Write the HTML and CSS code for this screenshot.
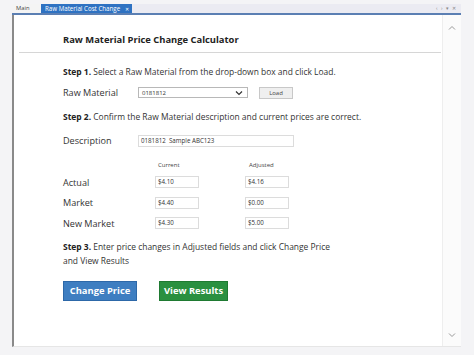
FILE: index.html
```html
<!DOCTYPE html>
<html>
<head>
<meta charset="utf-8">
<link rel="stylesheet" href="styles.css">
</head>
<body>
<div class="app">
  <div class="tabbar">
    <div class="tab tab-main">Main</div>
    <div class="tab tab-active">Raw Material Cost Change <span class="tab-x">✕</span></div>
    <div class="tab-tools">‹ › ▾ ✕</div>
  </div>
  <div class="panel">
    <div class="content">
      <h1 class="title">Raw Material Price Change Calculator</h1>
      <div class="rule"></div>
      <p class="step step1"><b>Step 1.</b> Select a Raw Material from the drop-down box and click Load.</p>
      <div class="row">
        <span class="label">Raw Material</span>
        <div class="select"><span>0181812</span><svg width="8" height="6" viewBox="0 0 8 6"><path d="M1 1.5 L4 4.5 L7 1.5" fill="none" stroke="#333" stroke-width="1.2"/></svg></div>
        <div class="btn-load">Load</div>
      </div>
      <p class="step step2"><b>Step 2.</b> Confirm the Raw Material description and current prices are correct.</p>
      <div class="row row-desc">
        <span class="label">Description</span>
        <div class="input input-desc">0181812&nbsp; Sample ABC123</div>
      </div>
      <div class="grid">
        <span></span><span class="colhead">Current</span><span class="colhead">Adjusted</span>
        <span class="label">Actual</span><div class="input input-price">$4.10</div><div class="input input-price">$4.16</div>
        <span class="label">Market</span><div class="input input-price">$4.40</div><div class="input input-price">$0.00</div>
        <span class="label">New Market</span><div class="input input-price">$4.30</div><div class="input input-price">$5.00</div>
      </div>
      <p class="step step3"><b>Step 3.</b> Enter price changes in Adjusted fields and click Change Price<br>and View Results</p>
      <div class="buttons">
        <div class="btn btn-blue">Change Price</div>
        <div class="btn btn-green">View Results</div>
      </div>
    </div>
    <div class="scrollbar">
      <svg width="8" height="6" viewBox="0 0 8 6"><path d="M1 4.5 L4 1.5 L7 4.5" fill="none" stroke="#999" stroke-width="1"/></svg>
      <svg width="8" height="6" viewBox="0 0 8 6"><path d="M1 1.5 L4 4.5 L7 1.5" fill="none" stroke="#999" stroke-width="1"/></svg>
    </div>
  </div>
</div>
</body>
</html>
```

FILE: styles.css
```css
html, body {
  margin: 0;
  padding: 0;
}
body {
  background: #f4f4f6;
  font-family: "Open Sans", "Noto Sans", sans-serif;
  color: #222;
  width: 474px;
  height: 355px;
  overflow: hidden;
}
.app {
  padding: 4px 0 0 12px;
  width: 449px;
}
.tabbar {
  display: flex;
  align-items: stretch;
  height: 9px;
  background: #ebebf2;
  border-bottom: 2px solid #5b7fb3;
  font-size: 5.8px;
  line-height: 9px;
}
.tab {
  white-space: nowrap;
}
.tab-main {
  background: #f4f4f4;
  color: #444;
  width: 22px;
  padding: 0 3px 0 4px;
}
.tab-active {
  background: #2e72c2;
  color: #fff;
  padding: 0 3px 0 4px;
  font-size: 6.2px;
}
.tab-x {
  margin-left: 3px;
  font-size: 5px;
}
.tab-tools {
  margin-left: auto;
  color: #888;
  font-size: 5px;
  padding-right: 4px;
  letter-spacing: 1px;
}
.panel {
  display: flex;
  height: 331px;
  background: #fff;
  border-left: 2px solid #8a8a8a;
  border-bottom: 1px solid #e6e6e6;
}
.content {
  flex: 1;
  padding: 0 0 0 49px;
}
.title {
  margin: 19px 0 0 0;
  font-size: 9.4px;
  font-weight: 700;
  line-height: 12px;
  color: #222;
}
.rule {
  margin: 6px 0 0 -44px;
  height: 1px;
  background: #d6d6d6;
  width: 422px;
}
.step {
  margin: 0;
  font-size: 8.45px;
  line-height: 11px;
  color: #333;
}
.step b {
  color: #222;
}
.step1 {
  margin-top: 13px;
}
.row {
  display: flex;
  align-items: center;
  margin-top: 9px;
}
.label {
  font-size: 9.1px;
  color: #333;
}
.row .label {
  width: 75px;
}
.select {
  width: 110px;
  height: 11px;
  border: 1px solid #b8b8b8;
  display: flex;
  align-items: center;
  justify-content: space-between;
  padding: 0 4px 0 3px;
  box-sizing: border-box;
  font-size: 6px;
  color: #333;
}
.btn-load {
  margin-left: 11px;
  width: 34px;
  height: 12px;
  box-sizing: border-box;
  border: 1px solid #c8c8c8;
  background: #efefef;
  font-size: 6px;
  color: #444;
  display: flex;
  align-items: center;
  justify-content: center;
}
.step2 {
  margin-top: 12px;
}
.row-desc {
  margin-top: 12px;
}
.input {
  height: 12px;
  box-sizing: border-box;
  border: 1px solid #dcdcdc;
  font-size: 6.2px;
  line-height: 10px;
  padding-left: 2px;
  color: #333;
}
.input-desc {
  width: 156px;
}
.grid {
  display: grid;
  grid-template-columns: 92px 90px 44px;
  grid-template-rows: 14px 20.5px 20.5px 20.5px;
  align-items: center;
  margin-top: 11px;
}
.grid .colhead {
  font-size: 6px;
  color: #444;
}
.grid .colhead:nth-child(2) {
  padding-left: 3px;
}
.grid .colhead:nth-child(3) {
  padding-left: 4px;
}
.input-price {
  width: 44px;
}
.step3 {
  margin-top: 6px;
  line-height: 14px;
}
.buttons {
  display: flex;
  gap: 22px;
  margin-top: 13px;
}
.btn {
  height: 20px;
  box-sizing: border-box;
  color: #fff;
  font-weight: 700;
  font-size: 9.4px;
  display: flex;
  align-items: center;
  justify-content: center;
}
.btn-blue {
  width: 74px;
  background: #3e7ec1;
  border: 1px solid #2d68a8;
}
.btn-green {
  width: 69px;
  background: #2a9040;
  border: 1px solid #1f7a32;
}
.scrollbar {
  width: 18px;
  display: flex;
  flex-direction: column;
  justify-content: space-between;
  align-items: center;
  padding: 10px 0 8px;
  background: #fbfbfb;
  border-left: 1px solid #eee;
}
```
